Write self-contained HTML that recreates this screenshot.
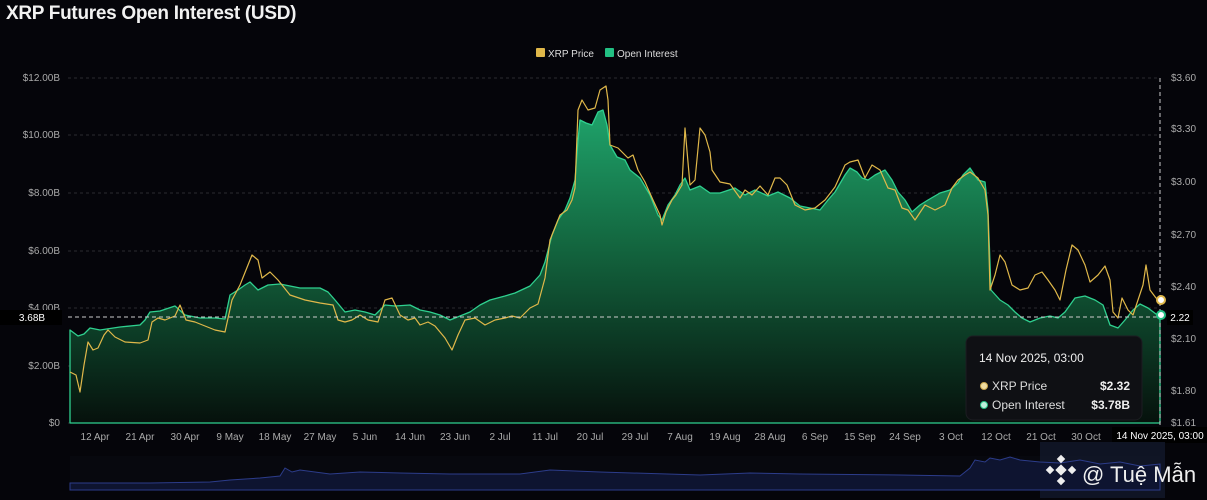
<!DOCTYPE html>
<html><head><meta charset="utf-8"><style>
html,body{margin:0;padding:0;background:#05050a;}
body{width:1207px;height:500px;overflow:hidden;position:relative;font-family:"Liberation Sans",sans-serif;}
.t{position:absolute;left:6px;top:3px;color:#f2f2f2;font-size:19px;font-weight:bold;letter-spacing:-0.3px}
svg{position:absolute;left:0;top:0}
</style></head><body>
<div class="t">XRP Futures Open Interest (USD)</div>
<svg width="1207" height="500" font-family="Liberation Sans, sans-serif">
<defs>
<linearGradient id="g" gradientUnits="userSpaceOnUse" x1="0" y1="100" x2="0" y2="423">
<stop offset="0" stop-color="#20a86e"/><stop offset="0.45" stop-color="#13663f"/><stop offset="1" stop-color="#06110c"/>
</linearGradient>
</defs>
<rect x="536" y="48" width="9" height="9" fill="#e0b84a" rx="1"/>
<text x="548" y="57" fill="#ddd" font-size="10">XRP Price</text>
<rect x="605" y="48" width="9" height="9" fill="#22c083" rx="1"/>
<text x="617" y="57" fill="#ddd" font-size="10">Open Interest</text>
<g stroke="#2a2a30" stroke-dasharray="3,3" stroke-width="1">
<line x1="68" y1="78" x2="1160" y2="78"/><line x1="68" y1="135" x2="1160" y2="135"/>
<line x1="68" y1="193" x2="1160" y2="193"/><line x1="68" y1="251" x2="1160" y2="251"/>
<line x1="68" y1="308" x2="1160" y2="308"/><line x1="68" y1="366" x2="1160" y2="366"/>
<line x1="68" y1="423" x2="1160" y2="423"/>
</g>
<g fill="#aaa" font-size="10" text-anchor="end">
<text x="60" y="81">$12.00B</text><text x="60" y="138">$10.00B</text><text x="60" y="196">$8.00B</text>
<text x="60" y="254">$6.00B</text><text x="60" y="311">$4.00B</text><text x="60" y="369">$2.00B</text><text x="60" y="426">$0</text>
</g>
<g fill="#aaa" font-size="10">
<text x="1171" y="81">$3.60</text><text x="1171" y="132">$3.30</text><text x="1171" y="185">$3.00</text>
<text x="1171" y="238">$2.70</text><text x="1171" y="290">$2.40</text><text x="1171" y="342">$2.10</text>
<text x="1171" y="394">$1.80</text><text x="1171" y="426">$1.61</text>
</g>
<path fill="url(#g)" stroke="#2fd08f" stroke-width="1.3" stroke-linejoin="round" d="M70,330 L78,336 84,334 90,328 100,330 120,327 140,325 145,320 150,312 160,311 175,306 185,315 200,318 215,318 225,319 230,295 238,290 245,285 250,282 258,290 268,285 280,284 300,288 320,288 328,292 335,300 345,312 355,310 365,312 375,315 385,305 395,306 410,305 420,310 430,312 440,315 450,320 460,316 470,312 480,305 490,300 505,296 515,293 530,286 540,275 545,262 552,235 558,220 565,210 570,198 575,180 578,140 580,120 586,123 592,125 598,112 603,110 607,125 610,145 617,157 625,160 630,170 640,178 650,195 658,215 662,220 668,205 675,195 680,185 685,178 690,190 700,186 710,193 720,193 735,188 745,195 755,190 768,196 778,192 790,198 800,206 810,208 820,210 828,200 835,192 845,175 850,168 857,172 862,178 868,180 875,175 885,170 892,180 898,192 905,200 912,212 920,205 928,200 940,193 950,190 958,183 963,175 970,168 978,180 985,182 988,210 991,290 1000,300 1008,305 1015,312 1022,318 1030,322 1040,318 1050,316 1058,318 1065,312 1075,298 1085,296 1095,300 1103,305 1110,325 1118,328 1125,320 1133,310 1140,304 1148,308 1156,314 1160,315 L1160,423 L70,423 Z"/>
<path fill="none" stroke="#e0b84a" stroke-width="1.2" stroke-linejoin="round" d="M70,372 L76,375 80,392 84,365 88,342 93,350 98,348 104,335 108,330 115,337 125,342 140,343 148,340 152,322 158,318 165,320 175,316 180,305 186,320 195,322 205,326 215,330 225,332 232,300 240,285 248,265 252,255 258,260 262,278 270,272 278,280 290,295 305,300 320,303 333,305 338,320 345,322 352,320 360,315 368,320 378,322 385,300 392,298 400,315 408,320 415,318 420,325 428,322 435,326 445,338 452,350 458,335 465,320 475,318 485,325 495,320 505,318 512,316 520,318 530,308 538,304 545,278 550,240 556,225 560,215 567,210 572,200 575,188 578,110 582,100 588,110 595,108 600,90 606,86 608,100 610,145 618,148 628,158 633,155 638,170 645,182 653,200 660,215 662,225 666,212 672,200 676,195 682,185 685,128 690,185 695,180 700,128 705,135 710,152 712,170 720,182 730,184 740,198 745,190 752,195 760,186 768,195 775,178 780,178 787,185 795,205 805,210 815,208 825,200 835,187 845,165 850,162 858,160 865,178 872,165 880,170 888,188 895,190 902,208 908,210 915,220 925,205 935,210 945,205 952,188 958,180 965,175 970,172 978,178 985,190 988,215 990,290 995,275 1000,255 1005,262 1012,285 1020,290 1028,288 1035,275 1042,272 1048,280 1055,290 1060,300 1066,270 1072,245 1078,250 1085,265 1090,282 1098,275 1105,266 1110,280 1113,312 1118,318 1122,298 1128,310 1133,315 1138,300 1143,285 1146,265 1150,290 1156,298 1160,300"/>
<line x1="68" y1="317" x2="1160" y2="317" stroke="#ccc" stroke-dasharray="4,3" stroke-width="1"/>
<line x1="1160" y1="78" x2="1160" y2="428" stroke="#ccc" stroke-dasharray="4,3" stroke-width="1"/>
<rect x="0" y="310" width="62" height="15" fill="#000"/>
<text x="32" y="321" fill="#fff" font-size="10" text-anchor="middle">3.68B</text>
<rect x="1167" y="310" width="26" height="15" fill="#000"/>
<text x="1180" y="321" fill="#fff" font-size="10" text-anchor="middle">2.22</text>
<circle cx="1161" cy="300" r="4" fill="#fff" stroke="#e0b84a" stroke-width="2"/>
<circle cx="1161" cy="315" r="4" fill="#fff" stroke="#22c083" stroke-width="2"/>
<rect x="966" y="336" width="176" height="84" rx="7" fill="#0f1014" stroke="#1c1d22"/>
<text x="979" y="362" fill="#eee" font-size="12">14 Nov 2025, 03:00</text>
<circle cx="984" cy="386" r="3.5" fill="#f0dca0" stroke="#c9a44a"/>
<text x="992" y="390" fill="#ddd" font-size="12">XRP Price</text>
<text x="1130" y="390" fill="#eee" font-size="12" text-anchor="end" font-weight="bold">$2.32</text>
<circle cx="984" cy="405" r="3.5" fill="#bff0dc" stroke="#22c083"/>
<text x="992" y="409" fill="#ddd" font-size="12">Open Interest</text>
<text x="1130" y="409" fill="#eee" font-size="12" text-anchor="end" font-weight="bold">$3.78B</text>
<g fill="#aaa" font-size="10" text-anchor="middle">
<text x="95" y="440">12 Apr</text><text x="140" y="440">21 Apr</text><text x="185" y="440">30 Apr</text>
<text x="230" y="440">9 May</text><text x="275" y="440">18 May</text><text x="320" y="440">27 May</text>
<text x="365" y="440">5 Jun</text><text x="410" y="440">14 Jun</text><text x="455" y="440">23 Jun</text>
<text x="500" y="440">2 Jul</text><text x="545" y="440">11 Jul</text><text x="590" y="440">20 Jul</text>
<text x="635" y="440">29 Jul</text><text x="680" y="440">7 Aug</text><text x="725" y="440">19 Aug</text>
<text x="770" y="440">28 Aug</text><text x="815" y="440">6 Sep</text><text x="860" y="440">15 Sep</text>
<text x="905" y="440">24 Sep</text><text x="951" y="440">3 Oct</text><text x="996" y="440">12 Oct</text>
<text x="1041" y="440">21 Oct</text><text x="1086" y="440">30 Oct</text>
</g>
<rect x="1112" y="427" width="95" height="16" fill="#000"/>
<text x="1160" y="439" fill="#fff" font-size="10" text-anchor="middle">14 Nov 2025, 03:00</text>
<rect x="70" y="456" width="1090" height="34" fill="#07080e"/>
<rect x="1040" y="442" width="125" height="56" fill="#121729" opacity="0.85"/>
<path fill="#0e1430" stroke="#2c3c8a" stroke-width="1" d="M70,483 L150,483 210,482 230,480 260,478 280,476 285,468 292,472 300,470 330,474 360,472 400,473 450,474 520,474 550,470 600,472 700,475 750,473 800,474 900,475 960,476 970,468 975,460 985,462 990,458 1000,460 1010,457 1020,460 1040,462 1060,463 1080,460 1100,464 1120,462 1140,466 1160,464 L1160,490 L70,490 Z"/>
<g transform="translate(1061,470)" fill="#eee">
<rect x="-4" y="-4" width="8" height="8" transform="rotate(45)"/>
<rect x="-3" y="-14" width="6" height="6" transform="rotate(45 0 -11)"/>
<rect x="-3" y="8" width="6" height="6" transform="rotate(45 0 11)"/>
<rect x="-14" y="-3" width="6" height="6" transform="rotate(45 -11 0)"/>
<rect x="8" y="-3" width="6" height="6" transform="rotate(45 11 0)"/>
</g>
<text x="1082" y="482" fill="#eee" font-size="22">@ Tuệ Mẫn</text>
</svg>
</body></html>
